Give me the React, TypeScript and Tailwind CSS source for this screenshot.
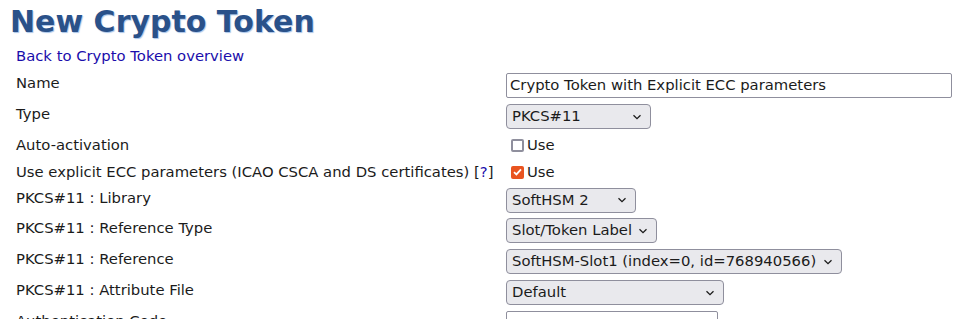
import { ReactNode } from 'react'

const font = { fontFamily: '"DejaVu Sans", Verdana, sans-serif' }

function Chevron() {
  return (
    <svg width="10" height="6" viewBox="0 0 10 6" className="shrink-0">
      <path d="M1.5 1.2 L5 4.6 L8.5 1.2" fill="none" stroke="#1b1b1b" strokeWidth="1.3" />
    </svg>
  )
}

function Select({ value, width }: { value: string; width: string }) {
  return (
    <div className={`${width} h-[25px] flex items-center justify-between pl-[5px] pr-[8px] bg-[#e9e9ed] border border-[#8f8f9d] rounded-[4px] text-[14.8px] text-[#1b1b1b]`}>
      <span className="whitespace-nowrap">{value}</span>
      <Chevron />
    </div>
  )
}

function Checkbox({ checked }: { checked?: boolean }) {
  return checked ? (
    <span className="w-[13px] h-[13px] rounded-[2px] bg-[#e95420] flex items-center justify-center ml-[5px] mr-[3px]">
      <svg width="9" height="8" viewBox="0 0 9 8">
        <path d="M1 4.2 L3.4 6.4 L8 1.3" fill="none" stroke="#fff" strokeWidth="1.8" />
      </svg>
    </span>
  ) : (
    <span className="w-[13px] h-[13px] rounded-[2px] border-2 border-[#8f8f9d] bg-white ml-[5px] mr-[3px]" />
  )
}

function Row({ label, h, lift, children }: { label: ReactNode; h: string; lift?: boolean; children: ReactNode }) {
  return (
    <div className={`flex items-center ${h}`}>
      <div className={`w-[506px] shrink-0 pl-[16px] text-[14.8px] text-[#1b1b1b] whitespace-nowrap ${lift ? 'pb-[4px]' : ''}`}>
        {label}
      </div>
      <div className="flex items-center">{children}</div>
    </div>
  )
}

export default function App() {
  return (
    <div className="w-[976px] h-[319px] overflow-hidden bg-white" style={font}>
      <h1 className="pl-[10px] pt-[2px] h-[43px] text-[30px] font-bold leading-[40px] text-[#2a5189] [text-shadow:1px_1px_1px_#a8c4e8]">
        New Crypto Token
      </h1>
      <div className="pl-[16px] h-[27px] flex items-center text-[14.8px]">
        <a className="text-[#1a0dab]">Back to Crypto Token overview</a>
      </div>

      <Row label="Name" h="h-[31px]" lift>
        <div className="w-[446px] h-[25px] border border-[#8f8f9d] rounded-[2px] flex items-center px-[3px] text-[14.8px] text-[#1b1b1b] whitespace-nowrap">
          Crypto Token with Explicit ECC parameters
        </div>
      </Row>
      <Row label="Type" h="h-[31px]" lift>
        <Select value="PKCS#11" width="w-[145px]" />
      </Row>
      <Row label="Auto-activation" h="h-[27px]">
        <Checkbox />
        <span className="text-[14.8px] text-[#1b1b1b]">Use</span>
      </Row>
      <Row
        label={
          <>
            Use explicit ECC parameters (ICAO CSCA and DS certificates){' '}
            <span>[</span>
            <a className="text-[#1a0dab]">?</a>
            <span>]</span>
          </>
        }
        h="h-[26px]"
      >
        <Checkbox checked />
        <span className="text-[14.8px] text-[#1b1b1b]">Use</span>
      </Row>
      <Row label="PKCS#11 : Library" h="h-[30px]" lift>
        <Select value="SoftHSM 2" width="w-[130px]" />
      </Row>
      <Row label="PKCS#11 : Reference Type" h="h-[31px]" lift>
        <Select value="Slot/Token Label" width="w-[151px]" />
      </Row>
      <Row label="PKCS#11 : Reference" h="h-[31px]" lift>
        <Select value="SoftHSM-Slot1 (index=0, id=768940566)" width="w-[336px]" />
      </Row>
      <Row label="PKCS#11 : Attribute File" h="h-[31px]" lift>
        <Select value="Default" width="w-[218px]" />
      </Row>
      <Row label="Authentication Code" h="h-[31px]" lift>
        <div className="w-[212px] h-[25px] border border-[#8f8f9d] rounded-[2px]" />
        <span className="ml-[6px] text-[14.8px] text-[#1b1b1b]">:</span>
      </Row>
    </div>
  )
}
